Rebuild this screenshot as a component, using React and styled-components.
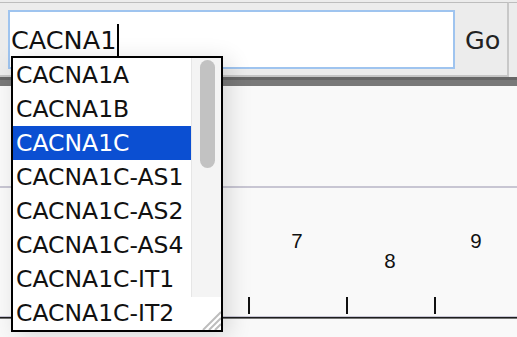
import styled, { createGlobalStyle } from "styled-components";

const GlobalStyle = createGlobalStyle`
    html, body {
        margin: 0;
        padding: 0;
        background: #f9f9f9;
        overflow: hidden;
    }
    * {
        box-sizing: border-box;
    }
`

const UI_FONT = `"DejaVu Sans", "Liberation Sans", sans-serif`

const suggestions = [
    'CACNA1A',
    'CACNA1B',
    'CACNA1C',
    'CACNA1C-AS1',
    'CACNA1C-AS2',
    'CACNA1C-AS4',
    'CACNA1C-IT1',
    'CACNA1C-IT2',
]

const ticks = [249, 347, 435]

const labels = [
    { text: '7', x: 297, y: 162 },
    { text: '8', x: 390, y: 182 },
    { text: '9', x: 476, y: 162 },
]

const App = () => {
    const selected = 2

    return (
        <>
            <GlobalStyle />
            <Page>
                <Header>
                    <Toolbar>
                        <SearchField>
                            <span>CACNA1</span>
                            <Caret />
                        </SearchField>
                        <GoLabel>Go</GoLabel>
                    </Toolbar>
                    <ToolbarSpare />
                </Header>
                <Divider />
                <Canvas>
                    <svg width="517" height="251" viewBox="0 0 517 251">
                        <rect x="0" y="100" width="517" height="2" fill="#c8c6d3" />
                        <rect x="0" y="230" width="517" height="1" fill="#c9c7d6" />
                        <rect x="0" y="231" width="517" height="1.6" fill="#1e1e1e" />
                        {ticks.map(x => (
                            <rect key={x} x={x - 1} y="211" width="2" height="17" fill="#111" />
                        ))}
                        {labels.map(l => (
                            <text
                                key={l.text}
                                x={l.x}
                                y={l.y}
                                textAnchor="middle"
                                fontFamily='"Liberation Sans", Arial, sans-serif'
                                fontSize="20.5"
                                fill="#111"
                            >
                                {l.text}
                            </text>
                        ))}
                    </svg>
                </Canvas>

                <Dropdown>
                    <List>
                        {suggestions.map((name, i) => (
                            <Item key={name} $selected={i === selected}>{name}</Item>
                        ))}
                    </List>
                    <ScrollColumn>
                        <Track>
                            <Thumb />
                        </Track>
                        <Corner>
                            <svg width="24" height="24" viewBox="0 0 24 24">
                                <path d="M24 6 L6 24 M24 12 L12 24 M24 18 L18 24" stroke="#bdbdbd" strokeWidth="2" />
                            </svg>
                        </Corner>
                    </ScrollColumn>
                </Dropdown>
            </Page>
        </>
    );
}

const Page = styled.div`
    position: relative;
    display: flex;
    flex-direction: column;
    width: 517px;
    height: 337px;
    overflow: hidden;
    font-family: ${UI_FONT};
`

const Header = styled.header`
    display: flex;
    height: 77px;
    padding-top: 2px;
    background: #ececec;
`

const Toolbar = styled.div`
    display: flex;
    align-items: center;
    width: 509px;
    padding: 7px 0 6px 8px;
    border-top: 1px solid #bdbdbd;
    border-bottom: 2px solid #c6c6c6;
    border-right: 2px solid #c8c8c8;
`

const ToolbarSpare = styled.div`
    flex: 1;
    border-top: 1px solid #bdbdbd;
`

const SearchField = styled.div`
    display: flex;
    align-items: center;
    width: 447px;
    height: 59px;
    padding-left: 1px;
    border: 2px solid #9fc4ef;
    background: #fff;
    font-size: 25.5px;
    color: #111;
    white-space: nowrap;
`

const Caret = styled.span`
    width: 1.7px;
    height: 32px;
    margin-left: 0.5px;
    background: #000;
`

const GoLabel = styled.span`
    margin-left: 10px;
    font-size: 25.5px;
    color: #222;
`

const Divider = styled.div`
    height: 9px;
    background: linear-gradient(#676767 0 3px, #797979 3px);
`

const Canvas = styled.main`
    flex: 1;
    background: #f9f9f9;

    svg {
        display: block;
    }
`

const Dropdown = styled.div`
    position: absolute;
    left: 11px;
    top: 56px;
    display: flex;
    width: 212px;
    height: 276px;
    border: 2px solid #000;
    background: #fff;
    box-shadow: 6px 4px 22px rgba(0, 0, 0, 0.14);
`

const List = styled.ul`
    flex: 1;
    margin: 0;
    padding: 0;
    list-style: none;
    overflow: hidden;
`

const Item = styled.li`
    height: 34px;
    padding-left: 3px;
    line-height: 34px;
    font-size: 23.5px;
    white-space: nowrap;
    color: ${props => props.$selected ? '#fff' : '#111'};
    background: ${props => props.$selected ? '#0b4fd2' : 'transparent'};
`

const ScrollColumn = styled.div`
    display: flex;
    flex-direction: column;
    width: 30px;
`

const Track = styled.div`
    height: 239px;
    padding: 2px 6px 0 8px;
    background: #f4f4f4;
    border-left: 1px solid #e6e6e6;
`

const Thumb = styled.div`
    height: 108px;
    border-radius: 8px;
    background: #c2c2c2;
`

const Corner = styled.div`
    flex: 1;
    display: flex;
    align-items: flex-end;
    justify-content: flex-end;
    background: #fff;

    svg {
        display: block;
    }
`

export default App
